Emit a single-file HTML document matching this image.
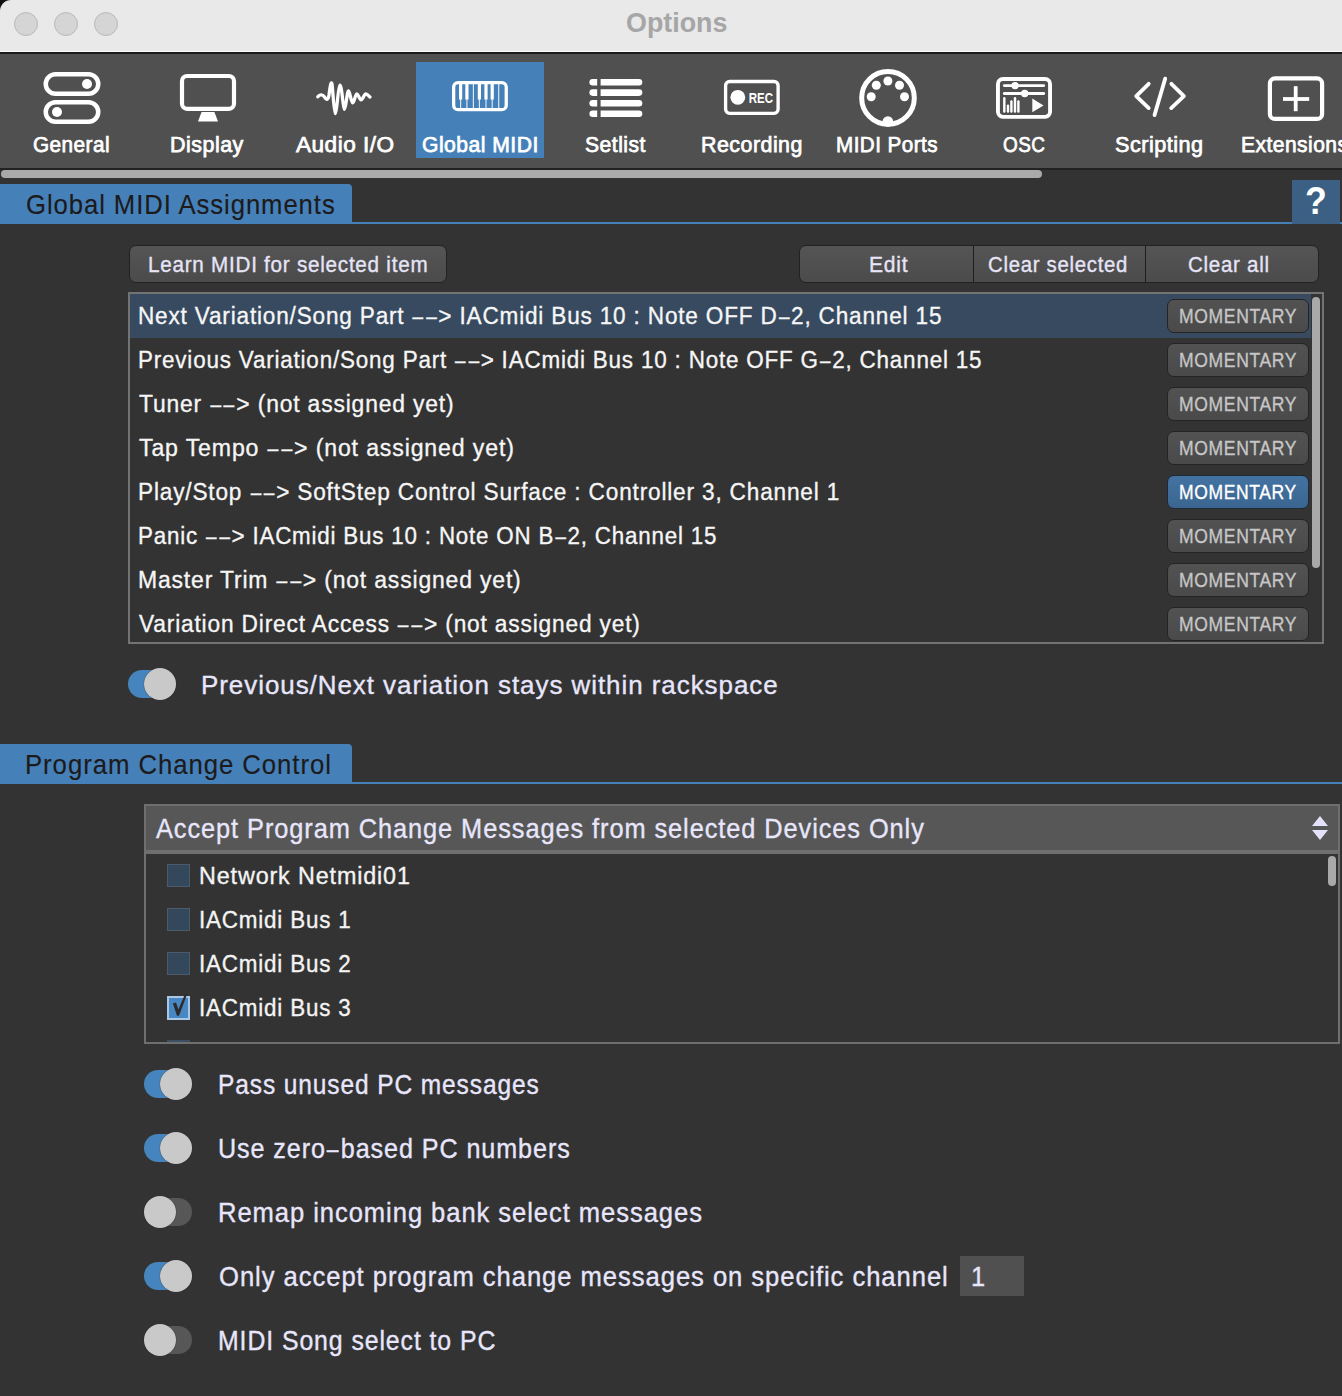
<!DOCTYPE html>
<html><head><meta charset="utf-8"><title>Options</title>
<style>
html,body{margin:0;padding:0;background:#333333;}
body{width:1342px;height:1396px;position:relative;overflow:hidden;background:#333333;font-family:"Liberation Sans",sans-serif;}
.r{position:absolute;}
.t{position:absolute;white-space:pre;transform-origin:0 0;-webkit-text-stroke:0.35px currentColor;}
.d{display:inline-block;transform:scaleX(0.84);}
#corner{position:absolute;left:0;top:0;width:14px;height:14px;background:#111;}
</style></head><body>
<div id="corner"></div>
<div class="r" style="left:0px;top:0px;width:1342px;height:51px;background:#e9e9e9;border-top-left-radius:11px;"></div>
<div class="r" style="left:0px;top:51px;width:1342px;height:1px;background:#fafafa;"></div>
<div class="r" style="left:0px;top:52px;width:1342px;height:2px;background:#1b1b1b;"></div>
<div class="r" style="left:14px;top:12px;width:22px;height:22px;border-radius:50%;background:#d5d5d5;border:1px solid #b9b9b9;"></div>
<div class="r" style="left:54px;top:12px;width:22px;height:22px;border-radius:50%;background:#d5d5d5;border:1px solid #b9b9b9;"></div>
<div class="r" style="left:94px;top:12px;width:22px;height:22px;border-radius:50%;background:#d5d5d5;border:1px solid #b9b9b9;"></div>
<div class="t" style="left:626.04px;top:9.37px;font-size:27.8px;line-height:27.8px;color:#a6a6a6;font-weight:bold;-webkit-text-stroke:0;transform:scaleX(0.9659);">Options</div>
<div class="r" style="left:0px;top:54px;width:1342px;height:114px;background:#505050;"></div>
<div class="r" style="left:416px;top:62px;width:128px;height:96px;background:#4581b8;"></div>
<div class="t" style="left:33.29px;top:134.25px;font-size:22.5px;line-height:22.5px;color:#ffffff;transform:scaleX(0.9217);letter-spacing:0.50px;-webkit-text-stroke:0.75px currentColor;">General</div>
<div class="t" style="left:170.28px;top:134.25px;font-size:22.5px;line-height:22.5px;color:#ffffff;transform:scaleX(0.9546);letter-spacing:0.50px;-webkit-text-stroke:0.75px currentColor;">Display</div>
<div class="t" style="left:295.60px;top:134.25px;font-size:22.5px;line-height:22.5px;color:#ffffff;transform:scaleX(1.0031);letter-spacing:0.50px;-webkit-text-stroke:0.75px currentColor;">Audio I/O</div>
<div class="t" style="left:421.57px;top:134.25px;font-size:22.5px;line-height:22.5px;color:#ffffff;transform:scaleX(0.9395);letter-spacing:0.50px;-webkit-text-stroke:0.75px currentColor;">Global MIDI</div>
<div class="t" style="left:585.26px;top:134.25px;font-size:22.5px;line-height:22.5px;color:#ffffff;transform:scaleX(0.9398);letter-spacing:0.50px;-webkit-text-stroke:0.75px currentColor;">Setlist</div>
<div class="t" style="left:700.79px;top:134.25px;font-size:22.5px;line-height:22.5px;color:#ffffff;transform:scaleX(0.9516);letter-spacing:0.50px;-webkit-text-stroke:0.75px currentColor;">Recording</div>
<div class="t" style="left:836.15px;top:134.25px;font-size:22.5px;line-height:22.5px;color:#ffffff;transform:scaleX(0.9177);letter-spacing:0.50px;-webkit-text-stroke:0.75px currentColor;">MIDI Ports</div>
<div class="t" style="left:1002.77px;top:134.25px;font-size:22.5px;line-height:22.5px;color:#ffffff;transform:scaleX(0.8431);letter-spacing:0.50px;-webkit-text-stroke:0.75px currentColor;">OSC</div>
<div class="t" style="left:1115.44px;top:134.25px;font-size:22.5px;line-height:22.5px;color:#ffffff;transform:scaleX(0.9630);letter-spacing:0.50px;-webkit-text-stroke:0.75px currentColor;">Scripting</div>
<div class="t" style="left:1241.32px;top:134.25px;font-size:22.5px;line-height:22.5px;color:#ffffff;transform:scaleX(0.9339);letter-spacing:0.50px;-webkit-text-stroke:0.75px currentColor;">Extensions</div>
<div class="r" style="left:0px;top:168px;width:1342px;height:2px;background:#222;"></div>
<div class="r" style="left:1px;top:170px;width:1041px;height:8px;background:#aaaaaa;border-radius:4px;"></div>
<svg class="r" style="left:0;top:0" width="1342" height="180" viewBox="0 0 1342 180"><rect x="45.75" y="74.25" width="52.5" height="19.5" rx="9.75" fill="none" stroke="#ffffff" stroke-width="4.5"/><rect x="45.75" y="102.25" width="52.5" height="19.5" rx="9.75" fill="none" stroke="#ffffff" stroke-width="4.5"/><circle cx="87" cy="84" r="5" fill="#ffffff"/><circle cx="57" cy="112" r="5" fill="#ffffff"/><rect x="182" y="76" width="52" height="32.8" rx="5" fill="none" stroke="#ffffff" stroke-width="4.2"/><polygon points="201.6,112.1 214.4,112.1 218,121.6 198,121.6" fill="#ffffff"/><path d="M317.8,96.8 C319.5,94.5 322.5,94 324.5,97 C326,100 328,101 329,95 C330,87 331,80 332,84 C333,92 334,113 335.4,113.5 C337,113 338,86 339.9,85.2 C342,85 343,109 344.3,109.3 C346,109 347,91 348.5,90.9 C350,91 351,102.5 352.7,102.8 C354.5,103 355,94 356.9,93.8 C358.5,94 359.5,99.8 361,99.8 C363,99.8 364,93.8 365.8,93.8 C367.5,94 368.5,96 370,97.1" fill="none" stroke="#ffffff" stroke-width="3.3" stroke-linecap="round" stroke-linejoin="round"/><rect x="453.65" y="82.65" width="52.6" height="27" rx="4.5" fill="none" stroke="#ffffff" stroke-width="3.3"/><rect x="460.0" y="84" width="1.2" height="24.5" fill="#ffffff" opacity="0.8"/><rect x="466.29999999999995" y="84" width="1.2" height="24.5" fill="#ffffff" opacity="0.8"/><rect x="472.79999999999995" y="84" width="1.2" height="24.5" fill="#ffffff" opacity="0.8"/><rect x="478.79999999999995" y="84" width="1.2" height="24.5" fill="#ffffff" opacity="0.8"/><rect x="485.4" y="84" width="1.2" height="24.5" fill="#ffffff" opacity="0.8"/><rect x="491.59999999999997" y="84" width="1.2" height="24.5" fill="#ffffff" opacity="0.8"/><rect x="498.09999999999997" y="84" width="1.2" height="24.5" fill="#ffffff" opacity="0.8"/><rect x="459.0" y="84" width="3.2" height="15.5" fill="#ffffff"/><rect x="465.29999999999995" y="84" width="3.2" height="15.5" fill="#ffffff"/><rect x="477.79999999999995" y="84" width="3.2" height="15.5" fill="#ffffff"/><rect x="484.4" y="84" width="3.2" height="15.5" fill="#ffffff"/><rect x="490.59999999999997" y="84" width="3.2" height="15.5" fill="#ffffff"/><rect x="589.4" y="78.9" width="52.9" height="6.6" rx="3.3" fill="#ffffff"/><rect x="597.2" y="78.4" width="3.4" height="7.6" fill="#505050"/><rect x="589.4" y="89.3" width="52.9" height="6.6" rx="3.3" fill="#ffffff"/><rect x="597.2" y="88.8" width="3.4" height="7.6" fill="#505050"/><rect x="589.4" y="100" width="52.9" height="6.6" rx="3.3" fill="#ffffff"/><rect x="597.2" y="99.5" width="3.4" height="7.6" fill="#505050"/><rect x="589.4" y="110.4" width="52.9" height="6.6" rx="3.3" fill="#ffffff"/><rect x="597.2" y="109.9" width="3.4" height="7.6" fill="#505050"/><rect x="725.6" y="81.5" width="52.5" height="31.8" rx="4" fill="none" stroke="#ffffff" stroke-width="3.35"/><circle cx="737.8" cy="97.3" r="7.4" fill="#ffffff"/><text x="748.8" y="103" font-family="Liberation Sans" font-weight="bold" font-size="15" fill="#ffffff" textLength="24.3" lengthAdjust="spacingAndGlyphs">REC</text><circle cx="888" cy="97.9" r="26.3" fill="none" stroke="#ffffff" stroke-width="5"/><circle cx="887.9" cy="81" r="4.5" fill="#ffffff"/><circle cx="876.3" cy="85.2" r="4.5" fill="#ffffff"/><circle cx="899.5" cy="85.2" r="4.5" fill="#ffffff"/><circle cx="871.2" cy="96.8" r="4.5" fill="#ffffff"/><circle cx="904.5" cy="96.8" r="4.5" fill="#ffffff"/><circle cx="887.9" cy="121.5" r="5.3" fill="#ffffff"/><rect x="997.95" y="78.95" width="52.1" height="37.9" rx="5" fill="none" stroke="#ffffff" stroke-width="3.9"/><line x1="1004.3" y1="85.6" x2="1043.7" y2="85.6" stroke="#ffffff" stroke-width="2.8" stroke-linecap="round"/><line x1="1004.3" y1="93.5" x2="1043.7" y2="93.5" stroke="#ffffff" stroke-width="2.8" stroke-linecap="round"/><circle cx="1015" cy="85.6" r="3.7" fill="#ffffff"/><circle cx="1024.7" cy="93.5" r="3.7" fill="#ffffff"/><line x1="1004.3" y1="98.3" x2="1004.3" y2="111.6" stroke="#ffffff" stroke-width="2.4" stroke-linecap="round"/><line x1="1008" y1="105.60000000000001" x2="1008" y2="111.6" stroke="#ffffff" stroke-width="2.4" stroke-linecap="round"/><line x1="1011.4" y1="101.5" x2="1011.4" y2="111.6" stroke="#ffffff" stroke-width="2.4" stroke-linecap="round"/><line x1="1015" y1="98.3" x2="1015" y2="111.6" stroke="#ffffff" stroke-width="2.4" stroke-linecap="round"/><line x1="1018.4" y1="101.5" x2="1018.4" y2="111.6" stroke="#ffffff" stroke-width="2.4" stroke-linecap="round"/><polygon points="1032.3,98.4 1043.5,105.4 1032.3,112.3" fill="#ffffff"/><polyline points="1148.7,83.8 1136.2,96.1 1148.7,108.1" fill="none" stroke="#ffffff" stroke-width="3.8" stroke-linecap="round" stroke-linejoin="round"/><polyline points="1171.4,83.8 1183.9,96.1 1171.2,108.1" fill="none" stroke="#ffffff" stroke-width="3.8" stroke-linecap="round" stroke-linejoin="round"/><line x1="1165.2" y1="78.6" x2="1154.5" y2="115.1" stroke="#ffffff" stroke-width="3.8" stroke-linecap="round"/><rect x="1269.9" y="78.4" width="52.2" height="40.5" rx="5" fill="none" stroke="#ffffff" stroke-width="4.2"/><rect x="1283" y="97.1" width="26.2" height="3.8" fill="#ffffff"/><rect x="1293.8" y="86.2" width="3.8" height="25" fill="#ffffff"/></svg>
<div class="r" style="left:0px;top:184px;width:352px;height:40px;background:#4581b8;border-top-right-radius:4px;"></div>
<div class="r" style="left:0px;top:222px;width:1342px;height:2px;background:#4581b8;"></div>
<div class="t" style="left:26.12px;top:191.00px;font-size:28px;line-height:28px;color:#1d1a1b;transform:scaleX(0.9167);letter-spacing:1.02px;-webkit-text-stroke:0.15px currentColor;">Global MIDI Assignments</div>
<div class="r" style="left:1292px;top:180px;width:48px;height:44px;background:#3b6083;"></div>
<div class="t" style="left:1305.31px;top:181.93px;font-size:38px;line-height:38px;color:#ffffff;font-weight:bold;-webkit-text-stroke:0;transform:scaleX(0.9375);">?</div>
<div class="r" style="left:129px;top:245px;width:318px;height:38px;background:linear-gradient(#555555,#4b4b4b);border:1px solid #222;box-sizing:border-box;border-radius:7px;"></div>
<div class="t" style="left:147.81px;top:254.28px;font-size:22px;line-height:22px;color:#e6e4f7;transform:scaleX(0.9384);letter-spacing:0.80px;">Learn MIDI for selected item</div>
<div class="r" style="left:799px;top:245px;width:520px;height:38px;background:linear-gradient(#555555,#4b4b4b);border:1px solid #222;box-sizing:border-box;border-radius:7px;"></div>
<div class="r" style="left:973px;top:245px;width:1px;height:38px;background:#1e1e1e;"></div>
<div class="r" style="left:1145px;top:245px;width:1px;height:38px;background:#1e1e1e;"></div>
<div class="t" style="left:868.88px;top:254.28px;font-size:22px;line-height:22px;color:#e6e4f7;transform:scaleX(0.9582);letter-spacing:0.80px;">Edit</div>
<div class="t" style="left:987.58px;top:254.28px;font-size:22px;line-height:22px;color:#e6e4f7;transform:scaleX(0.9231);letter-spacing:0.80px;">Clear selected</div>
<div class="t" style="left:1187.88px;top:254.28px;font-size:22px;line-height:22px;color:#e6e4f7;transform:scaleX(0.9312);letter-spacing:0.80px;">Clear all</div>
<div class="r" style="left:128px;top:292px;width:1196px;height:352px;border:2px solid #737373;box-sizing:border-box;background:#333333;"></div>
<div class="r" style="left:130px;top:294px;width:1181px;height:44px;background:#374a5f;"></div>
<div class="t" style="left:137.57px;top:303.99px;font-size:24.7px;line-height:24.7px;color:#f6f6f6;transform:scaleX(0.9142);letter-spacing:0.90px;">Next Variation/Song Part <span class="d">–</span><span class="d">–</span>&gt; IACmidi Bus 10 : Note OFF D<span class="d">–</span>2, Channel 15</div>
<div class="r" style="left:1167px;top:299px;width:142px;height:34px;background:linear-gradient(#525252,#4a4a4a);border:1px solid #242424;box-sizing:border-box;border-radius:7px;"></div>
<div class="t" style="left:1178.72px;top:305.70px;font-size:20.2px;line-height:20.2px;color:#c6c6c6;transform:scaleX(0.8687);letter-spacing:0.74px;">MOMENTARY</div>
<div class="t" style="left:137.58px;top:347.99px;font-size:24.7px;line-height:24.7px;color:#f6f6f6;transform:scaleX(0.9079);letter-spacing:0.90px;">Previous Variation/Song Part <span class="d">–</span><span class="d">–</span>&gt; IACmidi Bus 10 : Note OFF G<span class="d">–</span>2, Channel 15</div>
<div class="r" style="left:1167px;top:343px;width:142px;height:34px;background:linear-gradient(#525252,#4a4a4a);border:1px solid #242424;box-sizing:border-box;border-radius:7px;"></div>
<div class="t" style="left:1178.72px;top:349.70px;font-size:20.2px;line-height:20.2px;color:#c6c6c6;transform:scaleX(0.8687);letter-spacing:0.74px;">MOMENTARY</div>
<div class="t" style="left:138.94px;top:391.99px;font-size:24.7px;line-height:24.7px;color:#f6f6f6;transform:scaleX(0.9260);letter-spacing:0.90px;">Tuner <span class="d">–</span><span class="d">–</span>&gt; (not assigned yet)</div>
<div class="r" style="left:1167px;top:387px;width:142px;height:34px;background:linear-gradient(#525252,#4a4a4a);border:1px solid #242424;box-sizing:border-box;border-radius:7px;"></div>
<div class="t" style="left:1178.72px;top:393.70px;font-size:20.2px;line-height:20.2px;color:#c6c6c6;transform:scaleX(0.8687);letter-spacing:0.74px;">MOMENTARY</div>
<div class="t" style="left:138.93px;top:435.99px;font-size:24.7px;line-height:24.7px;color:#f6f6f6;transform:scaleX(0.9370);letter-spacing:0.90px;">Tap Tempo <span class="d">–</span><span class="d">–</span>&gt; (not assigned yet)</div>
<div class="r" style="left:1167px;top:431px;width:142px;height:34px;background:linear-gradient(#525252,#4a4a4a);border:1px solid #242424;box-sizing:border-box;border-radius:7px;"></div>
<div class="t" style="left:1178.72px;top:437.70px;font-size:20.2px;line-height:20.2px;color:#c6c6c6;transform:scaleX(0.8687);letter-spacing:0.74px;">MOMENTARY</div>
<div class="t" style="left:137.57px;top:479.99px;font-size:24.7px;line-height:24.7px;color:#f6f6f6;transform:scaleX(0.9161);letter-spacing:0.90px;">Play/Stop <span class="d">–</span><span class="d">–</span>&gt; SoftStep Control Surface : Controller 3, Channel 1</div>
<div class="r" style="left:1167px;top:475px;width:142px;height:34px;background:linear-gradient(#4373a2,#3b6590);border:1px solid #1f2a36;box-sizing:border-box;border-radius:7px;"></div>
<div class="t" style="left:1178.93px;top:481.60px;font-size:20.2px;line-height:20.2px;color:#ffffff;transform:scaleX(0.8664);letter-spacing:0.74px;">MOMENTARY</div>
<div class="t" style="left:137.59px;top:523.99px;font-size:24.7px;line-height:24.7px;color:#f6f6f6;transform:scaleX(0.9052);letter-spacing:0.90px;">Panic <span class="d">–</span><span class="d">–</span>&gt; IACmidi Bus 10 : Note ON B<span class="d">–</span>2, Channel 15</div>
<div class="r" style="left:1167px;top:519px;width:142px;height:34px;background:linear-gradient(#525252,#4a4a4a);border:1px solid #242424;box-sizing:border-box;border-radius:7px;"></div>
<div class="t" style="left:1178.72px;top:525.70px;font-size:20.2px;line-height:20.2px;color:#c6c6c6;transform:scaleX(0.8687);letter-spacing:0.74px;">MOMENTARY</div>
<div class="t" style="left:137.54px;top:567.99px;font-size:24.7px;line-height:24.7px;color:#f6f6f6;transform:scaleX(0.9293);letter-spacing:0.90px;">Master Trim <span class="d">–</span><span class="d">–</span>&gt; (not assigned yet)</div>
<div class="r" style="left:1167px;top:563px;width:142px;height:34px;background:linear-gradient(#525252,#4a4a4a);border:1px solid #242424;box-sizing:border-box;border-radius:7px;"></div>
<div class="t" style="left:1178.72px;top:569.70px;font-size:20.2px;line-height:20.2px;color:#c6c6c6;transform:scaleX(0.8687);letter-spacing:0.74px;">MOMENTARY</div>
<div class="t" style="left:139.31px;top:611.99px;font-size:24.7px;line-height:24.7px;color:#f6f6f6;transform:scaleX(0.9201);letter-spacing:0.90px;">Variation Direct Access <span class="d">–</span><span class="d">–</span>&gt; (not assigned yet)</div>
<div class="r" style="left:1167px;top:607px;width:142px;height:34px;background:linear-gradient(#525252,#4a4a4a);border:1px solid #242424;box-sizing:border-box;border-radius:7px;"></div>
<div class="t" style="left:1178.72px;top:613.70px;font-size:20.2px;line-height:20.2px;color:#c6c6c6;transform:scaleX(0.8687);letter-spacing:0.74px;">MOMENTARY</div>
<div class="r" style="left:128px;top:642px;width:1196px;height:2px;background:#737373;"></div>
<div class="r" style="left:1312px;top:297px;width:8px;height:271px;background:#a9a9a9;border-radius:4px;"></div>
<div class="r" style="left:128px;top:670px;width:48px;height:28px;background:#4584bd;border-radius:14px;"></div><div class="r" style="left:144px;top:668px;width:32px;height:32px;border-radius:50%;background:#c9c9c9;box-shadow:0 0 1px #222;"></div>
<div class="t" style="left:201.34px;top:672.17px;font-size:26.5px;line-height:26.5px;color:#e8e6fb;transform:scaleX(0.9797);letter-spacing:0.97px;">Previous/Next variation stays within rackspace</div>
<div class="r" style="left:0px;top:744px;width:352px;height:40px;background:#4581b8;border-top-right-radius:4px;"></div>
<div class="r" style="left:0px;top:782px;width:1342px;height:2px;background:#4581b8;"></div>
<div class="t" style="left:25.49px;top:751.20px;font-size:28px;line-height:28px;color:#1d1a1b;transform:scaleX(0.9196);letter-spacing:1.02px;-webkit-text-stroke:0.15px currentColor;">Program Change Control</div>
<div class="r" style="left:144px;top:804px;width:1196px;height:240px;border:2px solid #6f6f6f;box-sizing:border-box;background:#333333;"></div>
<div class="r" style="left:146px;top:806px;width:1192px;height:44px;background:#575757;"></div>
<div class="r" style="left:146px;top:850px;width:1192px;height:4px;background:#6f6f6f;"></div>
<div class="t" style="left:155.61px;top:815.20px;font-size:28px;line-height:28px;color:#e8e6fb;transform:scaleX(0.9058);letter-spacing:1.02px;">Accept Program Change Messages from selected Devices Only</div>
<svg class="r" style="left:1310px;top:814px" width="20" height="28" viewBox="0 0 20 28"><polygon points="10,2 18,12 2,12" fill="#e4e2f8"/><polygon points="2,16 18,16 10,26" fill="#e4e2f8"/></svg>
<div class="r" style="left:1328px;top:856px;width:8px;height:30px;background:#a9a9a9;border-radius:4px;"></div>
<div class="r" style="left:167px;top:864px;width:23px;height:23px;background:#34485c;border:1px solid #4c5a69;box-sizing:border-box;"></div>
<div class="t" style="left:199.20px;top:864.18px;font-size:24.6px;line-height:24.6px;color:#f4f4f4;transform:scaleX(0.9496);letter-spacing:0.90px;">Network Netmidi01</div>
<div class="r" style="left:167px;top:908px;width:23px;height:23px;background:#34485c;border:1px solid #4c5a69;box-sizing:border-box;"></div>
<div class="t" style="left:199.01px;top:908.18px;font-size:24.6px;line-height:24.6px;color:#f4f4f4;transform:scaleX(0.9108);letter-spacing:0.90px;">IACmidi Bus 1</div>
<div class="r" style="left:167px;top:952px;width:23px;height:23px;background:#34485c;border:1px solid #4c5a69;box-sizing:border-box;"></div>
<div class="t" style="left:199.01px;top:952.18px;font-size:24.6px;line-height:24.6px;color:#f4f4f4;transform:scaleX(0.9108);letter-spacing:0.90px;">IACmidi Bus 2</div>
<div class="r" style="left:167px;top:996px;width:23px;height:24px;background:#4787c3;border:2px solid #aac8e6;box-sizing:border-box;"></div>
<svg class="r" style="left:160px;top:988px" width="34" height="34" viewBox="160 988 34 34"><polygon points="172.9,1003.4 176.0,1002.6 178.4,1009.5 184.6,995.0 187.2,994.0 179.0,1015.8 177.0,1015.8" fill="#2c2a2b"/></svg>
<div class="t" style="left:199.01px;top:996.18px;font-size:24.6px;line-height:24.6px;color:#f4f4f4;transform:scaleX(0.9102);letter-spacing:0.90px;">IACmidi Bus 3</div>
<div class="r" style="left:167px;top:1040px;width:23px;height:2px;background:#3c5064;"></div>
<div class="r" style="left:144px;top:1042px;width:1196px;height:2px;background:#6f6f6f;"></div>
<div class="r" style="left:144px;top:1070px;width:48px;height:28px;background:#4584bd;border-radius:14px;"></div><div class="r" style="left:160px;top:1068px;width:32px;height:32px;border-radius:50%;background:#c9c9c9;box-shadow:0 0 1px #222;"></div>
<div class="t" style="left:217.79px;top:1071.73px;font-size:26.9px;line-height:26.9px;color:#e8e6fb;transform:scaleX(0.9115);letter-spacing:0.98px;">Pass unused PC messages</div>
<div class="r" style="left:144px;top:1134px;width:48px;height:28px;background:#4584bd;border-radius:14px;"></div><div class="r" style="left:160px;top:1132px;width:32px;height:32px;border-radius:50%;background:#c9c9c9;box-shadow:0 0 1px #222;"></div>
<div class="t" style="left:217.84px;top:1135.73px;font-size:26.9px;line-height:26.9px;color:#e8e6fb;transform:scaleX(0.9348);letter-spacing:0.98px;">Use zero<span class="d">–</span>based PC numbers</div>
<div class="r" style="left:144px;top:1198px;width:48px;height:28px;background:#575757;border-radius:14px;"></div><div class="r" style="left:144px;top:1196px;width:32px;height:32px;border-radius:50%;background:#c9c9c9;box-shadow:0 0 1px #222;"></div>
<div class="t" style="left:217.71px;top:1199.73px;font-size:26.9px;line-height:26.9px;color:#e8e6fb;transform:scaleX(0.9515);letter-spacing:0.98px;">Remap incoming bank select messages</div>
<div class="r" style="left:144px;top:1262px;width:48px;height:28px;background:#4584bd;border-radius:14px;"></div><div class="r" style="left:160px;top:1260px;width:32px;height:32px;border-radius:50%;background:#c9c9c9;box-shadow:0 0 1px #222;"></div>
<div class="t" style="left:218.56px;top:1263.73px;font-size:26.9px;line-height:26.9px;color:#e8e6fb;transform:scaleX(0.9534);letter-spacing:0.98px;">Only accept program change messages on specific channel</div>
<div class="r" style="left:144px;top:1326px;width:48px;height:28px;background:#575757;border-radius:14px;"></div><div class="r" style="left:144px;top:1324px;width:32px;height:32px;border-radius:50%;background:#c9c9c9;box-shadow:0 0 1px #222;"></div>
<div class="t" style="left:217.77px;top:1327.73px;font-size:26.9px;line-height:26.9px;color:#e8e6fb;transform:scaleX(0.9243);letter-spacing:0.98px;">MIDI Song select to PC</div>
<div class="r" style="left:960px;top:1256px;width:64px;height:40px;background:#505050;"></div>
<div class="t" style="left:971.12px;top:1263.94px;font-size:27px;line-height:27px;color:#e8e6fb;transform:scaleX(0.9402);letter-spacing:0.98px;">1</div>
</body></html>
